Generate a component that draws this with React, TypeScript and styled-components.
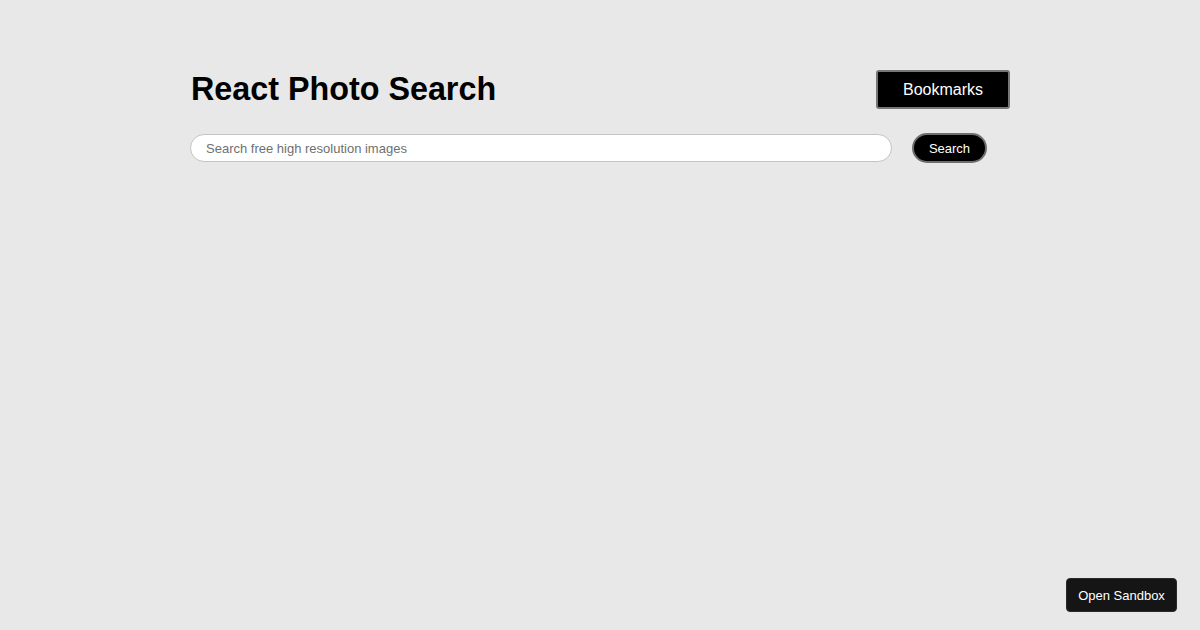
import React from "react";
import styled, { createGlobalStyle } from "styled-components";

const GlobalStyle = createGlobalStyle`
  html, body {
    margin: 0;
    padding: 0;
    background: #e8e8e8;
    font-family: "Liberation Sans", Arial, sans-serif;
  }
`;

export default function App() {
  return (
    <>
      <GlobalStyle />
      <Page>
        <Header>
          <Title>React Photo Search</Title>
          <BookmarksButton>Bookmarks</BookmarksButton>
        </Header>
        <SearchForm onSubmit={(e) => e.preventDefault()}>
          <SearchInput placeholder="Search free high resolution images" />
          <SearchButton type="submit">Search</SearchButton>
        </SearchForm>
      </Page>
      <SandboxButton>Open Sandbox</SandboxButton>
    </>
  );
}

const Page = styled.div`
  width: 820px;
  margin: 0 auto;
  padding-top: 70px;
  display: flex;
  flex-direction: column;
  gap: 24px;
`;

const Header = styled.div`
  display: flex;
  align-items: center;
  justify-content: space-between;
  height: 39px;
`;

const Title = styled.h1`
  margin: 0;
  padding-left: 1px;
  font-size: 32.3px;
  font-weight: 700;
  color: #000;
`;

const BookmarksButton = styled.button`
  width: 134px;
  height: 39px;
  background: #000;
  color: #fff;
  border: 2px solid #767676;
  border-radius: 3px;
  font-family: "Liberation Sans", Arial, sans-serif;
  font-size: 16px;
  cursor: pointer;
`;

const SearchForm = styled.form`
  display: flex;
  align-items: center;
  gap: 20px;
  padding-right: 23px;
`;

const SearchInput = styled.input`
  flex: 1;
  height: 28px;
  box-sizing: border-box;
  border: 1px solid #c4c4c4;
  border-radius: 14px;
  background: #fff;
  padding: 0 15px;
  font-family: "Liberation Sans", Arial, sans-serif;
  font-size: 13px;
  outline: none;
  &::placeholder {
    color: #6f6f6f;
  }
`;

const SearchButton = styled.button`
  width: 75px;
  height: 30px;
  box-sizing: border-box;
  background: #000;
  color: #fff;
  border: 2px solid #6e6e6e;
  border-radius: 15px;
  font-family: "Liberation Sans", Arial, sans-serif;
  font-size: 13px;
  cursor: pointer;
`;

const SandboxButton = styled.button`
  position: fixed;
  right: 23px;
  bottom: 18px;
  width: 111px;
  height: 34px;
  background: #151515;
  color: #fff;
  border: 1px solid #2a2a2a;
  border-radius: 4px;
  font-family: "Liberation Sans", Arial, sans-serif;
  font-size: 13px;
  cursor: pointer;
`;
